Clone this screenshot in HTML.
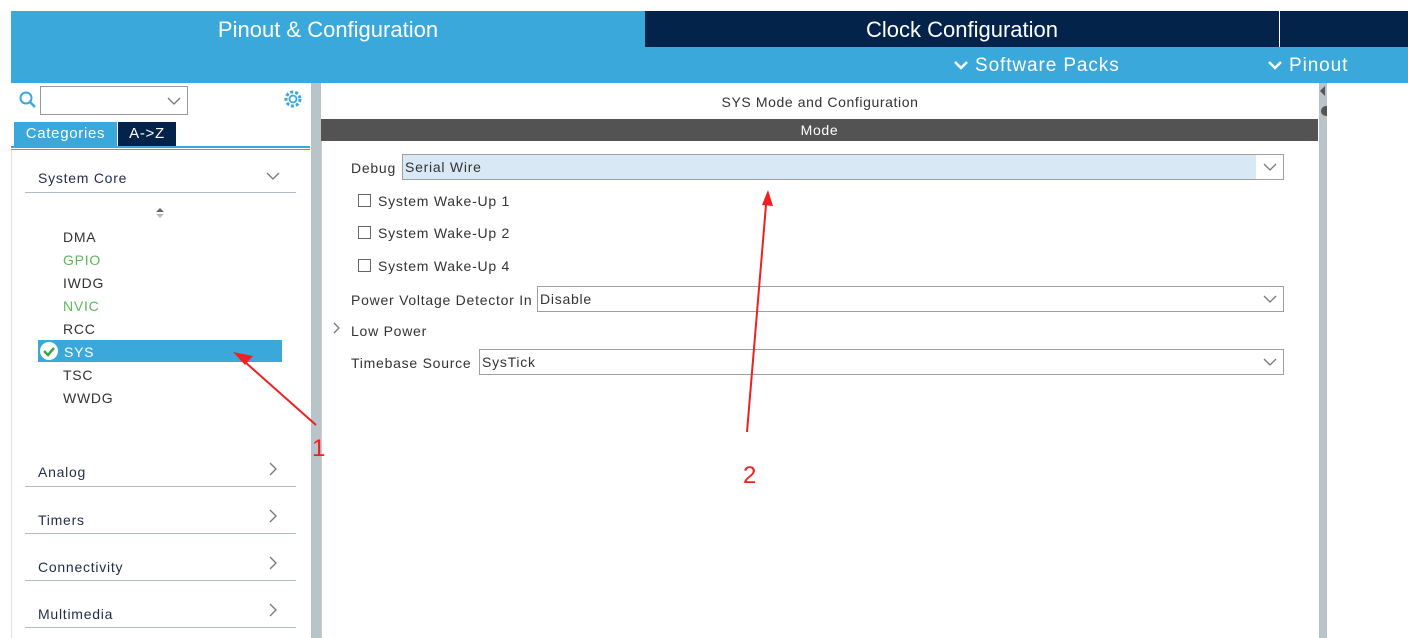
<!DOCTYPE html>
<html><head><meta charset="utf-8"><style>
*{margin:0;padding:0;box-sizing:border-box}
body{width:1408px;height:638px;background:#fff;position:relative;overflow:hidden;font-family:"Liberation Sans",Arial,sans-serif;}
.a{position:absolute}
.t{font-size:14px;color:#333;white-space:nowrap;letter-spacing:0.75px}
.sel{position:absolute;border:1px solid #a0a0a0;height:26px;background:#fff;font-size:14px;color:#333;padding:4px 2px;white-space:nowrap;letter-spacing:0.75px}
.chev{position:absolute;right:6px;top:5px}
.cb{position:absolute;width:13px;height:13px;border:1px solid #666;background:#fff}
.cat{position:absolute;left:25px;width:271px;height:1px;background:#b0bcc8}
</style></head><body>
<!-- top bar -->
<div class="a" style="left:11px;top:11px;width:1397px;height:72px;background:#3aa8db"></div>
<div class="a" style="left:645px;top:11px;width:763px;height:36px;background:#04234b"></div>
<div class="a" style="left:1279px;top:11px;width:1px;height:36px;background:#fff"></div>
<div class="a" style="left:11px;top:17px;width:634px;text-align:center;color:#fff;font-size:22px">Pinout &amp; Configuration</div>
<div class="a" style="left:645px;top:17px;width:634px;text-align:center;color:#fff;font-size:22px">Clock Configuration</div>
<div class="a" style="left:953px;top:55px;color:#fff;font-size:19px;letter-spacing:0.9px;white-space:nowrap">
<svg width="16" height="12" style="margin-right:6px"><path d="M2 3l6 6 6-6" stroke="#fff" stroke-width="2.5" fill="none"/></svg>Software Packs</div>
<div class="a" style="left:1267px;top:55px;color:#fff;font-size:19px;letter-spacing:0.9px;white-space:nowrap">
<svg width="16" height="12" style="margin-right:6px"><path d="M2 3l6 6 6-6" stroke="#fff" stroke-width="2.5" fill="none"/></svg>Pinout</div>
<!-- left panel -->
<svg class="a" style="left:18px;top:90px" width="20" height="20"><circle cx="8" cy="8" r="5.5" stroke="#3aa8db" stroke-width="2" fill="none"/><path d="M12 12l5 5" stroke="#3aa8db" stroke-width="2.5"/></svg>
<div class="a" style="left:40px;top:86px;width:148px;height:29px;border:1px solid #999"><svg class="a" style="left:126px;top:10px" width="14" height="9"><path d="M1 1l6 6 6-6" stroke="#777" stroke-width="1.3" fill="none"/></svg></div>
<svg class="a" style="left:283px;top:89px" width="20" height="20"><circle cx="10" cy="10" r="7" stroke="#3aa8db" stroke-width="3" fill="none" stroke-dasharray="3 2"/><circle cx="10" cy="10" r="3.5" stroke="#3aa8db" stroke-width="1.8" fill="none"/></svg>
<div class="a" style="left:14px;top:122px;width:103px;height:24px;background:#3aa8db;color:#fff;font-size:15px;text-align:center;line-height:24px;letter-spacing:0.7px">Categories</div>
<div class="a" style="left:118px;top:122px;width:58px;height:24px;background:#04234b;color:#fff;font-size:15px;text-align:center;line-height:24px;letter-spacing:0.7px">A-&gt;Z</div>
<div class="a" style="left:11px;top:146px;width:299px;height:2px;background:#3aa8db"></div>
<div class="a" style="left:11px;top:149px;width:299px;height:1px;background:#3aa8db"></div>
<div class="a" style="left:11px;top:150px;width:1px;height:488px;background:#dde3e8"></div>
<div class="a t" style="left:38px;top:170px;color:#1f2d4a">System Core</div>
<svg class="a" style="left:266px;top:172px" width="14" height="9"><path d="M1 1l6 6 6-6" stroke="#777" stroke-width="1.3" fill="none"/></svg>
<div class="cat" style="top:192px"></div>
<svg class="a" style="left:155px;top:207px" width="10" height="12"><path d="M1 5l4-4 4 4z" fill="#666"/><path d="M1 7l4 4 4-4z" fill="#bbb"/></svg>
<div class="a t" style="left:63px;top:229px">DMA</div>
<div class="a t" style="left:63px;top:252px;color:#5cb85c">GPIO</div>
<div class="a t" style="left:63px;top:275px">IWDG</div>
<div class="a t" style="left:63px;top:298px;color:#5cb85c">NVIC</div>
<div class="a t" style="left:63px;top:321px">RCC</div>
<div class="a" style="left:38px;top:340px;width:244px;height:22px;background:#3aa8db"></div>
<svg class="a" style="left:39px;top:341px" width="20" height="20"><circle cx="10" cy="10" r="9" fill="#fff"/><path d="M5 10l4 4 6-7" stroke="#3aa64a" stroke-width="2.5" fill="none"/></svg>
<div class="a t" style="left:64px;top:344px;color:#fff">SYS</div>
<div class="a t" style="left:63px;top:367px">TSC</div>
<div class="a t" style="left:63px;top:390px">WWDG</div>
<div class="a t" style="left:38px;top:464px;color:#1f2d4a">Analog</div>
<div class="cat" style="top:486px"></div>
<div class="a t" style="left:38px;top:512px;color:#1f2d4a">Timers</div>
<div class="cat" style="top:533px"></div>
<div class="a t" style="left:38px;top:559px;color:#1f2d4a">Connectivity</div>
<div class="cat" style="top:580px"></div>
<div class="a t" style="left:38px;top:606px;color:#1f2d4a">Multimedia</div>
<div class="cat" style="top:627px"></div>
<svg class="a" style="left:269px;top:462px" width="9" height="14"><path d="M1 1l6 6-6 6" stroke="#777" stroke-width="1.3" fill="none"/></svg>
<svg class="a" style="left:269px;top:509px" width="9" height="14"><path d="M1 1l6 6-6 6" stroke="#777" stroke-width="1.3" fill="none"/></svg>
<svg class="a" style="left:269px;top:556px" width="9" height="14"><path d="M1 1l6 6-6 6" stroke="#777" stroke-width="1.3" fill="none"/></svg>
<svg class="a" style="left:269px;top:603px" width="9" height="14"><path d="M1 1l6 6-6 6" stroke="#777" stroke-width="1.3" fill="none"/></svg>
<!-- scrollbars -->
<div class="a" style="left:311px;top:83px;width:10px;height:555px;background:#b9c3ca"></div>
<div class="a" style="left:1319px;top:83px;width:8px;height:555px;background:#b9c3ca"></div>
<svg class="a" style="left:1319px;top:86px" width="8" height="34"><path d="M6 0v10L1 5z" fill="#555"/><circle cx="7" cy="25" r="5" fill="#555"/></svg>
<!-- content -->
<div class="a" style="left:321px;top:94px;width:998px;text-align:center;font-size:14px;color:#333;letter-spacing:0.6px">SYS Mode and Configuration</div>
<div class="a" style="left:321px;top:119px;width:997px;height:22px;background:#525352;color:#fff;font-size:14px;text-align:center;line-height:22px;letter-spacing:0.7px">Mode</div>
<div class="a" style="left:321px;top:141px;width:1px;height:497px;background:#ccc"></div>
<div class="a t" style="left:351px;top:160px">Debug</div>
<div class="sel" style="left:402px;top:154px;width:882px;background:#d9e8f5">Serial Wire<div class="a" style="right:0;top:0;width:27px;height:24px;background:#fff"></div><svg class="chev" width="14" height="9" style="top:8px"><path d="M1 1l6 6 6-6" stroke="#777" stroke-width="1.3" fill="none"/></svg></div>
<div class="cb" style="left:358px;top:194px"></div><div class="a t" style="left:378px;top:193px">System Wake-Up 1</div>
<div class="cb" style="left:358px;top:226px"></div><div class="a t" style="left:378px;top:225px">System Wake-Up 2</div>
<div class="cb" style="left:358px;top:259px"></div><div class="a t" style="left:378px;top:258px">System Wake-Up 4</div>
<div class="a t" style="left:351px;top:292px">Power Voltage Detector In</div>
<div class="sel" style="left:537px;top:286px;width:747px">Disable<svg class="chev" width="14" height="9" style="top:8px"><path d="M1 1l6 6 6-6" stroke="#777" stroke-width="1.3" fill="none"/></svg></div>
<svg class="a" style="left:333px;top:322px" width="8" height="13"><path d="M1 1l5 5-5 5" stroke="#777" stroke-width="1.3" fill="none"/></svg>
<div class="a t" style="left:351px;top:323px">Low Power</div>
<div class="a t" style="left:351px;top:355px">Timebase Source</div>
<div class="sel" style="left:479px;top:349px;width:805px">SysTick<svg class="chev" width="14" height="9" style="top:8px"><path d="M1 1l6 6 6-6" stroke="#777" stroke-width="1.3" fill="none"/></svg></div>
<!-- annotations -->
<svg class="a" style="left:0;top:0" width="1408" height="638">
<path d="M316 425L245 362" stroke="#f02020" stroke-width="2"/>
<path d="M233 352l20 4-8 9z" fill="#f02020"/>
<path d="M747 432L766 205" stroke="#f02020" stroke-width="2"/>
<path d="M768 190l5 16-11-1z" fill="#f02020"/>
<text x="312" y="456" fill="#f02020" font-size="24" font-family="Liberation Sans">1</text>
<text x="743" y="483" fill="#f02020" font-size="24" font-family="Liberation Sans">2</text>
</svg>
</body></html>
